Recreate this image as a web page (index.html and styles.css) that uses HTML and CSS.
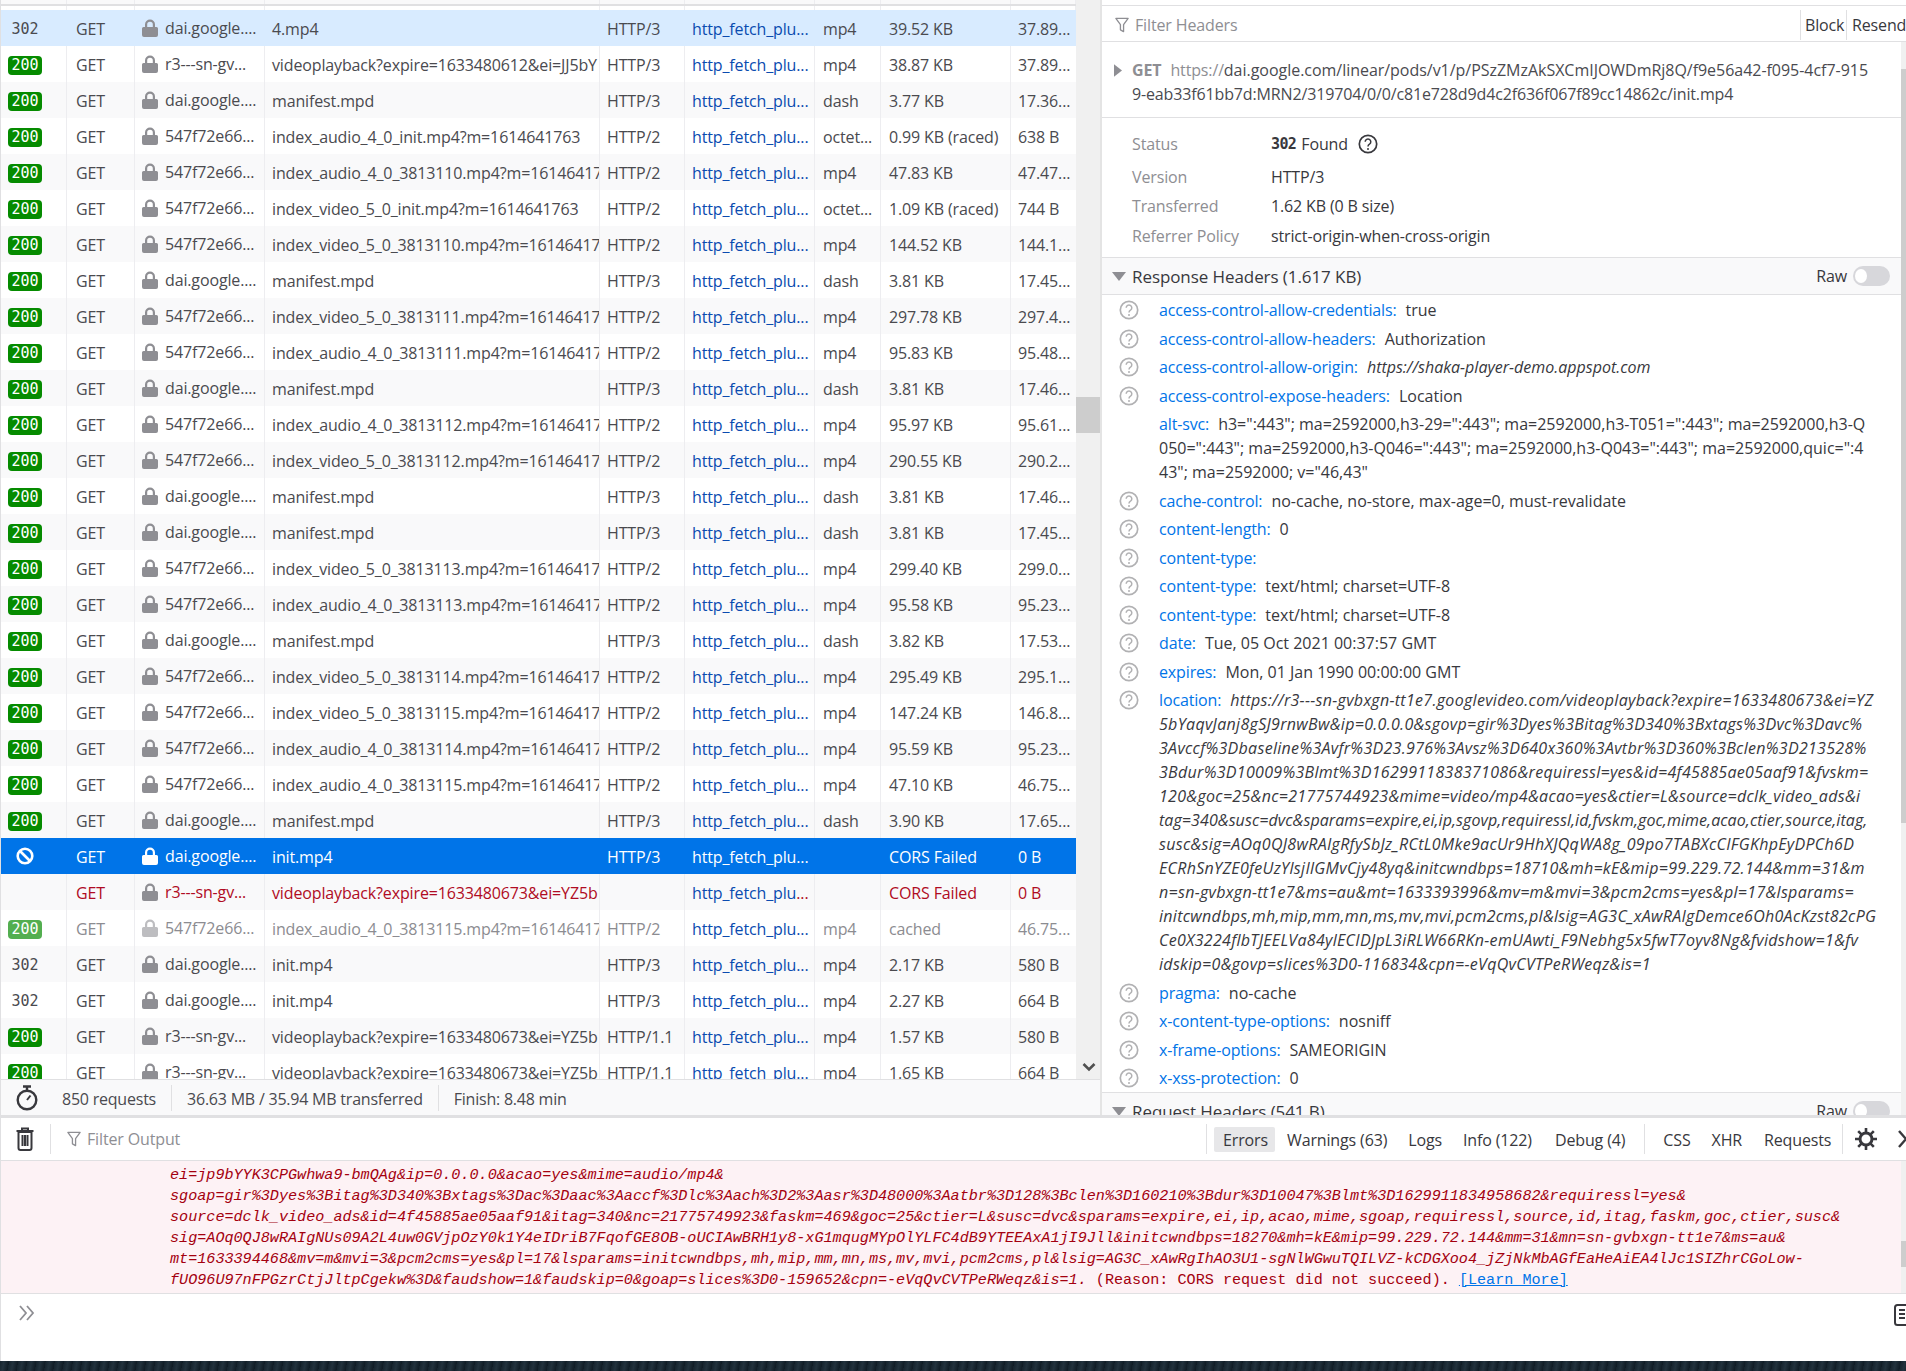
FILE: index.html
```html
<!DOCTYPE html>
<html lang="en">
<head>
<meta charset="utf-8">
<title>Network Monitor</title>
<link rel="stylesheet" href="styles.css">
</head>
<body>
<svg class="defs" width="0" height="0" aria-hidden="true">
  <symbol id="lock" viewBox="0 0 16 18"><path d="M3 8V5.500a5 5 0 0 1 10 0V8h1.500a1.500 1.500 0 0 1 1.500 1.500V16a2 2 0 0 1-2 2H2a2 2 0 0 1-2-2V9.500A1.500 1.500 0 0 1 1.500 8zM5.200 8h5.600V5.500a2.800 2.800 0 0 0-5.600 0z" fill="currentColor"/></symbol>
  <symbol id="help" viewBox="0 0 20 20"><circle cx="10" cy="10" r="8.700" fill="none" stroke="currentColor" stroke-width="1.700"/><path d="M7.200 7.800a2.800 2.800 0 1 1 4.300 2.400c-1 .6-1.500 1.100-1.500 2.200" fill="none" stroke="currentColor" stroke-width="1.500"/><circle cx="10" cy="15" r="1" fill="currentColor"/></symbol>
  <symbol id="funnel" viewBox="0 0 16 18"><path d="M1 1.500h14l-5.200 7v8l-3.600-2v-6z" fill="none" stroke="currentColor" stroke-width="1.500" stroke-linejoin="round"/></symbol>
</svg>
<div class="devtools">
  <div class="split">
    <section class="network">
      <div class="net-main">
        <div class="table">
          <div class="table-head"><i></i><i></i><i></i><i></i><i></i><i></i><i></i><i></i><i></i></div>
          <div class="table-gap"><i></i><i></i><i></i><i></i><i></i><i></i><i></i><i></i><i></i></div>
          <div class="rows">
            <div class="row hi"><span class="st"><b class="code">302</b></span><span>GET</span><span class="dom"><svg class="lock"><use href="#lock"/></svg>dai.google....</span><span>4.mp4</span><span>HTTP/3</span><span class="cause">http_fetch_plu...</span><span>mp4</span><span>39.52 KB</span><span>37.89...</span></div>
            <div class="row"><span class="st"><b class="badge">200</b></span><span>GET</span><span class="dom"><svg class="lock"><use href="#lock"/></svg>r3---sn-gv...</span><span>videoplayback?expire=1633480612&amp;ei=JJ5bY</span><span>HTTP/3</span><span class="cause">http_fetch_plu...</span><span>mp4</span><span>38.87 KB</span><span>37.89...</span></div>
            <div class="row"><span class="st"><b class="badge">200</b></span><span>GET</span><span class="dom"><svg class="lock"><use href="#lock"/></svg>dai.google....</span><span>manifest.mpd</span><span>HTTP/3</span><span class="cause">http_fetch_plu...</span><span>dash</span><span>3.77 KB</span><span>17.36...</span></div>
            <div class="row"><span class="st"><b class="badge">200</b></span><span>GET</span><span class="dom"><svg class="lock"><use href="#lock"/></svg>547f72e66...</span><span>index_audio_4_0_init.mp4?m=1614641763</span><span>HTTP/2</span><span class="cause">http_fetch_plu...</span><span>octet...</span><span>0.99 KB (raced)</span><span>638 B</span></div>
            <div class="row"><span class="st"><b class="badge">200</b></span><span>GET</span><span class="dom"><svg class="lock"><use href="#lock"/></svg>547f72e66...</span><span>index_audio_4_0_3813110.mp4?m=16146417</span><span>HTTP/2</span><span class="cause">http_fetch_plu...</span><span>mp4</span><span>47.83 KB</span><span>47.47...</span></div>
            <div class="row"><span class="st"><b class="badge">200</b></span><span>GET</span><span class="dom"><svg class="lock"><use href="#lock"/></svg>547f72e66...</span><span>index_video_5_0_init.mp4?m=1614641763</span><span>HTTP/2</span><span class="cause">http_fetch_plu...</span><span>octet...</span><span>1.09 KB (raced)</span><span>744 B</span></div>
            <div class="row"><span class="st"><b class="badge">200</b></span><span>GET</span><span class="dom"><svg class="lock"><use href="#lock"/></svg>547f72e66...</span><span>index_video_5_0_3813110.mp4?m=16146417</span><span>HTTP/2</span><span class="cause">http_fetch_plu...</span><span>mp4</span><span>144.52 KB</span><span>144.1...</span></div>
            <div class="row"><span class="st"><b class="badge">200</b></span><span>GET</span><span class="dom"><svg class="lock"><use href="#lock"/></svg>dai.google....</span><span>manifest.mpd</span><span>HTTP/3</span><span class="cause">http_fetch_plu...</span><span>dash</span><span>3.81 KB</span><span>17.45...</span></div>
            <div class="row"><span class="st"><b class="badge">200</b></span><span>GET</span><span class="dom"><svg class="lock"><use href="#lock"/></svg>547f72e66...</span><span>index_video_5_0_3813111.mp4?m=16146417</span><span>HTTP/2</span><span class="cause">http_fetch_plu...</span><span>mp4</span><span>297.78 KB</span><span>297.4...</span></div>
            <div class="row"><span class="st"><b class="badge">200</b></span><span>GET</span><span class="dom"><svg class="lock"><use href="#lock"/></svg>547f72e66...</span><span>index_audio_4_0_3813111.mp4?m=16146417</span><span>HTTP/2</span><span class="cause">http_fetch_plu...</span><span>mp4</span><span>95.83 KB</span><span>95.48...</span></div>
            <div class="row"><span class="st"><b class="badge">200</b></span><span>GET</span><span class="dom"><svg class="lock"><use href="#lock"/></svg>dai.google....</span><span>manifest.mpd</span><span>HTTP/3</span><span class="cause">http_fetch_plu...</span><span>dash</span><span>3.81 KB</span><span>17.46...</span></div>
            <div class="row"><span class="st"><b class="badge">200</b></span><span>GET</span><span class="dom"><svg class="lock"><use href="#lock"/></svg>547f72e66...</span><span>index_audio_4_0_3813112.mp4?m=16146417</span><span>HTTP/2</span><span class="cause">http_fetch_plu...</span><span>mp4</span><span>95.97 KB</span><span>95.61...</span></div>
            <div class="row"><span class="st"><b class="badge">200</b></span><span>GET</span><span class="dom"><svg class="lock"><use href="#lock"/></svg>547f72e66...</span><span>index_video_5_0_3813112.mp4?m=16146417</span><span>HTTP/2</span><span class="cause">http_fetch_plu...</span><span>mp4</span><span>290.55 KB</span><span>290.2...</span></div>
            <div class="row"><span class="st"><b class="badge">200</b></span><span>GET</span><span class="dom"><svg class="lock"><use href="#lock"/></svg>dai.google....</span><span>manifest.mpd</span><span>HTTP/3</span><span class="cause">http_fetch_plu...</span><span>dash</span><span>3.81 KB</span><span>17.46...</span></div>
            <div class="row"><span class="st"><b class="badge">200</b></span><span>GET</span><span class="dom"><svg class="lock"><use href="#lock"/></svg>dai.google....</span><span>manifest.mpd</span><span>HTTP/3</span><span class="cause">http_fetch_plu...</span><span>dash</span><span>3.81 KB</span><span>17.45...</span></div>
            <div class="row"><span class="st"><b class="badge">200</b></span><span>GET</span><span class="dom"><svg class="lock"><use href="#lock"/></svg>547f72e66...</span><span>index_video_5_0_3813113.mp4?m=16146417</span><span>HTTP/2</span><span class="cause">http_fetch_plu...</span><span>mp4</span><span>299.40 KB</span><span>299.0...</span></div>
            <div class="row"><span class="st"><b class="badge">200</b></span><span>GET</span><span class="dom"><svg class="lock"><use href="#lock"/></svg>547f72e66...</span><span>index_audio_4_0_3813113.mp4?m=16146417</span><span>HTTP/2</span><span class="cause">http_fetch_plu...</span><span>mp4</span><span>95.58 KB</span><span>95.23...</span></div>
            <div class="row"><span class="st"><b class="badge">200</b></span><span>GET</span><span class="dom"><svg class="lock"><use href="#lock"/></svg>dai.google....</span><span>manifest.mpd</span><span>HTTP/3</span><span class="cause">http_fetch_plu...</span><span>dash</span><span>3.82 KB</span><span>17.53...</span></div>
            <div class="row"><span class="st"><b class="badge">200</b></span><span>GET</span><span class="dom"><svg class="lock"><use href="#lock"/></svg>547f72e66...</span><span>index_video_5_0_3813114.mp4?m=16146417</span><span>HTTP/2</span><span class="cause">http_fetch_plu...</span><span>mp4</span><span>295.49 KB</span><span>295.1...</span></div>
            <div class="row"><span class="st"><b class="badge">200</b></span><span>GET</span><span class="dom"><svg class="lock"><use href="#lock"/></svg>547f72e66...</span><span>index_video_5_0_3813115.mp4?m=16146417</span><span>HTTP/2</span><span class="cause">http_fetch_plu...</span><span>mp4</span><span>147.24 KB</span><span>146.8...</span></div>
            <div class="row"><span class="st"><b class="badge">200</b></span><span>GET</span><span class="dom"><svg class="lock"><use href="#lock"/></svg>547f72e66...</span><span>index_audio_4_0_3813114.mp4?m=16146417</span><span>HTTP/2</span><span class="cause">http_fetch_plu...</span><span>mp4</span><span>95.59 KB</span><span>95.23...</span></div>
            <div class="row"><span class="st"><b class="badge">200</b></span><span>GET</span><span class="dom"><svg class="lock"><use href="#lock"/></svg>547f72e66...</span><span>index_audio_4_0_3813115.mp4?m=16146417</span><span>HTTP/2</span><span class="cause">http_fetch_plu...</span><span>mp4</span><span>47.10 KB</span><span>46.75...</span></div>
            <div class="row"><span class="st"><b class="badge">200</b></span><span>GET</span><span class="dom"><svg class="lock"><use href="#lock"/></svg>dai.google....</span><span>manifest.mpd</span><span>HTTP/3</span><span class="cause">http_fetch_plu...</span><span>dash</span><span>3.90 KB</span><span>17.65...</span></div>
            <div class="row sel"><span class="st"><svg class="block" viewBox="0 0 18 18"><circle cx="9" cy="9" r="7.300" fill="none" stroke="currentColor" stroke-width="2.600"/><path d="M4 4l10 10" stroke="currentColor" stroke-width="2.600"/></svg></span><span>GET</span><span class="dom"><svg class="lock"><use href="#lock"/></svg>dai.google....</span><span>init.mp4</span><span>HTTP/3</span><span class="cause">http_fetch_plu...</span><span></span><span>CORS Failed</span><span>0 B</span></div>
            <div class="row err"><span class="st"></span><span>GET</span><span class="dom"><svg class="lock"><use href="#lock"/></svg>r3---sn-gv...</span><span>videoplayback?expire=1633480673&amp;ei=YZ5b</span><span></span><span class="cause">http_fetch_plu<u>...</u></span><span></span><span>CORS Failed</span><span>0 B</span></div>
            <div class="row cached"><span class="st"><b class="badge">200</b></span><span>GET</span><span class="dom"><svg class="lock"><use href="#lock"/></svg>547f72e66...</span><span>index_audio_4_0_3813115.mp4?m=16146417</span><span>HTTP/2</span><span class="cause">http_fetch_plu...</span><span>mp4</span><span>cached</span><span>46.75...</span></div>
            <div class="row"><span class="st"><b class="code">302</b></span><span>GET</span><span class="dom"><svg class="lock"><use href="#lock"/></svg>dai.google....</span><span>init.mp4</span><span>HTTP/3</span><span class="cause">http_fetch_plu...</span><span>mp4</span><span>2.17 KB</span><span>580 B</span></div>
            <div class="row"><span class="st"><b class="code">302</b></span><span>GET</span><span class="dom"><svg class="lock"><use href="#lock"/></svg>dai.google....</span><span>init.mp4</span><span>HTTP/3</span><span class="cause">http_fetch_plu...</span><span>mp4</span><span>2.27 KB</span><span>664 B</span></div>
            <div class="row"><span class="st"><b class="badge">200</b></span><span>GET</span><span class="dom"><svg class="lock"><use href="#lock"/></svg>r3---sn-gv...</span><span>videoplayback?expire=1633480673&amp;ei=YZ5b</span><span>HTTP/1.1</span><span class="cause">http_fetch_plu...</span><span>mp4</span><span>1.57 KB</span><span>580 B</span></div>
            <div class="row"><span class="st"><b class="badge">200</b></span><span>GET</span><span class="dom"><svg class="lock"><use href="#lock"/></svg>r3---sn-gv...</span><span>videoplayback?expire=1633480673&amp;ei=YZ5b</span><span>HTTP/1.1</span><span class="cause">http_fetch_plu...</span><span>mp4</span><span>1.65 KB</span><span>664 B</span></div>
          </div>
        </div>
        <div class="net-scroll"><div class="net-thumb"></div><svg class="chev" viewBox="0 0 14 10"><path d="M1.500 2l5.500 5.500L12.500 2" fill="none" stroke="currentColor" stroke-width="2.600"/></svg></div>
      </div>
      <div class="statusbar">
        <svg class="watch" viewBox="0 0 22 26"><path d="M7 1.500h8M11 2v3" stroke="currentColor" stroke-width="2.400" fill="none"/><circle cx="11" cy="15" r="9.300" fill="none" stroke="currentColor" stroke-width="2.400"/><path d="M11 15l3.500-4.500" stroke="currentColor" stroke-width="2" fill="none"/></svg>
        <span class="stat">850 requests</span>
        <span class="stat">36.63 MB / 35.94 MB transferred</span>
        <span class="stat last">Finish: 8.48 min</span>
      </div>
    </section>
    <aside class="side">
      <div class="side-filter">
        <svg class="funnel"><use href="#funnel"/></svg>
        <span class="ph">Filter Headers</span>
        <span class="side-btn block-btn">Block</span>
        <span class="side-btn resend-btn">Resend</span>
      </div>
      <div class="side-body">
        <div class="url-sec">
          <svg class="tw-r" viewBox="0 0 9 14"><path d="M0 0l9 7-9 7z" fill="currentColor"/></svg>
          <div class="url"><b>GET</b><span class="scheme">https://</span><span class="url-head">dai.google.com/linear/pods/v1/p/PSzZMzAkSXCmIJOWDmRj8Q/f9e56a42-f095-4cf7-915</span><br>9-eab33f61bb7d:MRN2/319704/0/0/c81e728d9d4c2f636f067f89cc14862c/init.mp4</div>
        </div>
        <dl class="sum">
          <dt>Status</dt><dd><b class="code dark">302</b> Found<svg class="q dark"><use href="#help"/></svg></dd>
          <dt>Version</dt><dd>HTTP/3</dd>
          <dt>Transferred</dt><dd>1.62 KB (0 B size)</dd>
          <dt>Referrer Policy</dt><dd>strict-origin-when-cross-origin</dd>
        </dl>
        <div class="sec-head"><svg class="tw-d" viewBox="0 0 14 9"><path d="M0 0h14L7 9z" fill="currentColor"/></svg><span>Response Headers (1.617 KB)</span><em>Raw</em><i class="toggle"></i></div>
        <div class="hdrs">
          <div class="h"><svg class="q"><use href="#help"/></svg><p><a>access-control-allow-credentials:</a>true</p></div>
          <div class="h"><svg class="q"><use href="#help"/></svg><p><a>access-control-allow-headers:</a>Authorization</p></div>
          <div class="h"><svg class="q"><use href="#help"/></svg><p><a>access-control-allow-origin:</a><em>https://shaka-player-demo.appspot.com</em></p></div>
          <div class="h"><svg class="q"><use href="#help"/></svg><p><a>access-control-expose-headers:</a>Location</p></div>
          <div class="h"><span class="q"></span><p><a>alt-svc:</a>h3=":443"; ma=2592000,h3-29=":443"; ma=2592000,h3-T051=":443"; ma=2592000,h3-Q<br>050=":443"; ma=2592000,h3-Q046=":443"; ma=2592000,h3-Q043=":443"; ma=2592000,quic=":4<br>43"; ma=2592000; v="46,43"</p></div>
          <div class="h"><svg class="q"><use href="#help"/></svg><p><a>cache-control:</a>no-cache, no-store, max-age=0, must-revalidate</p></div>
          <div class="h"><svg class="q"><use href="#help"/></svg><p><a>content-length:</a>0</p></div>
          <div class="h"><svg class="q"><use href="#help"/></svg><p><a>content-type:</a></p></div>
          <div class="h"><svg class="q"><use href="#help"/></svg><p><a>content-type:</a>text/html; charset=UTF-8</p></div>
          <div class="h"><svg class="q"><use href="#help"/></svg><p><a>content-type:</a>text/html; charset=UTF-8</p></div>
          <div class="h"><svg class="q"><use href="#help"/></svg><p><a>date:</a>Tue, 05 Oct 2021 00:37:57 GMT</p></div>
          <div class="h"><svg class="q"><use href="#help"/></svg><p><a>expires:</a>Mon, 01 Jan 1990 00:00:00 GMT</p></div>
          <div class="h"><svg class="q"><use href="#help"/></svg><p><a>location:</a><em class="loc">https://r3---sn-gvbxgn-tt1e7.googlevideo.com/videoplayback?expire=1633480673&amp;ei=YZ<br>5bYaqvJanj8gSJ9rnwBw&amp;ip=0.0.0.0&amp;sgovp=gir%3Dyes%3Bitag%3D340%3Bxtags%3Dvc%3Davc%<br>3Avccf%3Dbaseline%3Avfr%3D23.976%3Avsz%3D640x360%3Avtbr%3D360%3Bclen%3D213528%<br>3Bdur%3D10009%3Blmt%3D1629911838371086&amp;requiressl=yes&amp;id=4f45885ae05aaf91&amp;fvskm=<br>120&amp;goc=25&amp;nc=21775744923&amp;mime=video/mp4&amp;acao=yes&amp;ctier=L&amp;source=dclk_video_ads&amp;i<br><span class="tight">tag=340&amp;susc=dvc&amp;sparams=expire,ei,ip,sgovp,requiressl,id,fvskm,goc,mime,acao,ctier,source,itag,</span><br>susc&amp;sig=AOq0QJ8wRAIgRfySbJz_RCtL0Mke9acUr9HhXJQqWA8g_09po7TABXcCIFGKhpEyDPCh6D<br>ECRhSnYZE0feUzYlsjIlGMvCjy48yq&amp;initcwndbps=18710&amp;mh=kE&amp;mip=99.229.72.144&amp;mm=31&amp;m<br>n=sn-gvbxgn-tt1e7&amp;ms=au&amp;mt=1633393996&amp;mv=m&amp;mvi=3&amp;pcm2cms=yes&amp;pl=17&amp;lsparams=<br>initcwndbps,mh,mip,mm,mn,ms,mv,mvi,pcm2cms,pl&amp;lsig=AG3C_xAwRAIgDemce6Oh0AcKzst82cPG<br>Ce0X3224flbTJEELVa84ylECIDJpL3iRLW66RKn-emUAwti_F9Nebhg5x5fwT7oyv8Ng&amp;fvidshow=1&amp;fv<br>idskip=0&amp;govp=slices%3D0-116834&amp;cpn=-eVqQvCVTPeRWeqz&amp;is=1</em></p></div>
          <div class="h"><svg class="q"><use href="#help"/></svg><p><a>pragma:</a>no-cache</p></div>
          <div class="h"><svg class="q"><use href="#help"/></svg><p><a>x-content-type-options:</a>nosniff</p></div>
          <div class="h"><svg class="q"><use href="#help"/></svg><p><a>x-frame-options:</a>SAMEORIGIN</p></div>
          <div class="h"><svg class="q"><use href="#help"/></svg><p><a>x-xss-protection:</a>0</p></div>
        </div>
        <div class="sec-head"><svg class="tw-d" viewBox="0 0 14 9"><path d="M0 0h14L7 9z" fill="currentColor"/></svg><span>Request Headers (541 B)</span><em>Raw</em><i class="toggle"></i></div>
        <div class="side-scroll"><div class="side-thumb"></div></div>
      </div>
    </aside>
  </div>
  <div class="console-bar">
    <svg class="trash" viewBox="0 0 18 24"><path d="M6 3V1.500h6V3M.5 4h17" fill="none" stroke="currentColor" stroke-width="2"/><path d="M2.500 5h13v16a2 2 0 0 1-2 2h-9a2 2 0 0 1-2-2zM6.500 8v11M9 8v11M11.500 8v11" fill="none" stroke="currentColor" stroke-width="2"/></svg>
    <span class="vr"></span>
    <svg class="funnel"><use href="#funnel"/></svg>
    <span class="ph">Filter Output</span>
    <div class="tabs">
      <span class="vr"></span>
      <span class="tab on">Errors</span>
      <span class="tab first">Warnings (63)</span>
      <span class="tab">Logs</span>
      <span class="tab">Info (122)</span>
      <span class="tab dbg">Debug (4)</span>
      <span class="vr mid"></span>
      <span class="tab css">CSS</span>
      <span class="tab">XHR</span>
      <span class="tab req">Requests</span>
      <span class="vr end"></span>
      <svg class="gear" viewBox="0 0 24 24"><path d="M12 1v5M12 18v5M1 12h5M18 12h5M4.200 4.200l3.500 3.500M16.300 16.300l3.500 3.500M4.200 19.800l3.500-3.500M16.300 7.700l3.500-3.500" stroke="currentColor" stroke-width="2.600" fill="none"/><circle cx="12" cy="12" r="6" fill="none" stroke="currentColor" stroke-width="3"/></svg>
      <svg class="more" viewBox="0 0 10 18"><path d="M1 1l7 8-7 8" fill="none" stroke="currentColor" stroke-width="2.400"/></svg>
    </div>
  </div>
  <div class="console-msg">
    <div class="msg">ei=jp9bYYK3CPGwhwa9-bmQAg&amp;ip=0.0.0.0&amp;acao=yes&amp;mime=audio/mp4&amp;<br>sgoap=gir%3Dyes%3Bitag%3D340%3Bxtags%3Dac%3Daac%3Aaccf%3Dlc%3Aach%3D2%3Aasr%3D48000%3Aatbr%3D128%3Bclen%3D160210%3Bdur%3D10047%3Blmt%3D1629911834958682&amp;requiressl=yes&amp;<br>source=dclk_video_ads&amp;id=4f45885ae05aaf91&amp;itag=340&amp;nc=21775749923&amp;faskm=469&amp;goc=25&amp;ctier=L&amp;susc=dvc&amp;sparams=expire,ei,ip,acao,mime,sgoap,requiressl,source,id,itag,faskm,goc,ctier,susc&amp;<br>sig=AOq0QJ8wRAIgNUs09A2L4uw0GVjpOzY0k1Y4eIDriB7FqofGE8OB-oUCIAwBRH1y8-xG1mqugMYpOlYLFC4dB9YTEEAxA1jI9Jll&amp;initcwndbps=18270&amp;mh=kE&amp;mip=99.229.72.144&amp;mm=31&amp;mn=sn-gvbxgn-tt1e7&amp;ms=au&amp;<br>mt=1633394468&amp;mv=m&amp;mvi=3&amp;pcm2cms=yes&amp;pl=17&amp;lsparams=initcwndbps,mh,mip,mm,mn,ms,mv,mvi,pcm2cms,pl&amp;lsig=AG3C_xAwRgIhAO3U1-sgNlWGwuTQILVZ-kCDGXoo4_jZjNkMbAGfEaHeAiEA4lJc1SIZhrCGoLow-<br>fUO96U97nFPGzrCtjJltpCgekw%3D&amp;faudshow=1&amp;faudskip=0&amp;goap=slices%3D0-159652&amp;cpn=-eVqQvCVTPeRWeqz&amp;is=1. <span class="reason">(Reason: CORS request did not succeed).</span> <a class="learn">[Learn More]</a></div>
    <div class="msg-scroll"><div class="msg-thumb"></div></div>
  </div>
  <div class="console-input">
    <svg class="prompt" viewBox="0 0 18 18"><path d="M2 2l6 7-6 7M9 2l6 7-6 7" fill="none" stroke="currentColor" stroke-width="1.800"/></svg>
    <svg class="sideicon" viewBox="0 0 12 22"><rect x="1" y="1" width="18" height="20" rx="2.500" fill="none" stroke="currentColor" stroke-width="2"/><path d="M5 6h6M5 10h6M5 14h6" stroke="currentColor" stroke-width="2"/></svg>
  </div>
</div>
<div class="desktop"></div>
</body>
</html>
```
FILE: styles.css
```css
* { box-sizing: border-box; }
html, body { margin: 0; height: 1371px; overflow: hidden; background: #fff; }
body { font-family: "Open Sans", "Noto Sans", sans-serif; font-size: 16px; letter-spacing: -.14px; color: #38383d; }
.defs { position: absolute; }
.devtools { height: 1361px; display: flex; flex-direction: column; border-left: 1px solid #e0e0e2; }
.split { height: 1118px; display: flex; border-bottom: 3px solid #e0e0e2; flex: none; }

.network { width: 1101px; flex: none; display: flex; flex-direction: column; border-right: 2px solid #e4e4e4; }
.net-main { height: 1079px; display: flex; flex: none; overflow: hidden; }
.table { width: 1075px; flex: none; }
.table-head, .table-gap, .row { display: grid; grid-template-columns: 66px 68px 130px 335px 85px 130px 66px 130px 65px; }
.table-head { height: 6px; background: #f9f9fa; border-bottom: 2px solid #e0e0e2; }
.table-gap { height: 4px; }
.table-head i, .table-gap i { border-right: 1px solid #ededf0; }
.rows { display: flex; flex-direction: column; }
.row { height: 36px; flex: none; align-items: center; line-height: 38px; color: #4a4a4f; white-space: nowrap; }
.row:nth-child(odd) { background: #f9f9fa; }
.row:nth-child(even) { background: #fff; }
.row > span { display: block; height: 36px; overflow: hidden; padding-left: 7px; border-right: 1px solid #ededf0; }
.row > span:nth-child(2) { padding-left: 9px; }
.row > span:nth-child(7), .row > span:nth-child(8) { padding-left: 8px; }
.row > span:last-child { border-right: 0; }
.row.hi { background: #d8ebff; }
.row.hi > span, .row.sel > span { border-right-color: transparent; }
.row.sel { background: #0074e8; color: #fff; }
.row.sel .cause, .row.sel .lock { color: #fff; }
.row.err, .row.err .dom { color: #b00b23; }
.row.err .lock { color: #8e8e93; }
.row.err .cause u { color: #b00b23; text-decoration: none; }
.row.cached { color: #8c8c91; }
.row.cached .lock { color: #bdbdc0; }
.row.cached .badge { background: #53ae50; }
.row > .st { display: flex; align-items: center; padding-left: 7px; }
.badge { display: block; width: 34px; height: 19px; margin-top: 2px; border-radius: 4px; background: #058b00; color: #fff; font: 400 15px/19px "DejaVu Sans Mono", monospace; text-align: center; letter-spacing: -.1px; }
.code { display: block; width: 34px; margin-top: 2px; font: 400 15px/19px "DejaVu Sans Mono", monospace; text-align: center; letter-spacing: -.1px; }
.code.dark { width: auto; margin: 0; font-weight: 700; letter-spacing: -.6px; color: #38383d; }
.row > .dom { display: flex; align-items: center; gap: 7px; padding-left: 7px; }
.lock { width: 16px; height: 18px; flex: none; color: #8e8e93; }
.cause { color: #0a4bb0; }
.block { width: 18px; height: 18px; color: #fff; margin: 0 0 0 8px; }

.net-scroll { flex: 1; background: #f0f0f0; position: relative; padding-top: 397px; }
.net-thumb { height: 36px; background: #cdcdcd; }
.chev { position: absolute; bottom: 7px; left: 6px; width: 14px; height: 10px; color: #505050; }

.statusbar { height: 36px; flex: none; display: flex; align-items: center; background: #f9f9fa; border-top: 1px solid #e0e0e2; padding-left: 15px; }
.watch { width: 22px; height: 26px; color: #38383d; flex: none; margin-right: 24px; }
.stat { display: block; height: 26px; line-height: 28px; padding-right: 15px; margin-right: 15px; border-right: 1px solid #e0e0e2; color: #4a4a4f; white-space: nowrap; letter-spacing: -.22px; }
.stat.last { border: 0; }

.side { flex: 1; min-width: 0; display: flex; flex-direction: column; overflow: hidden; }
.side-filter { height: 37px; margin-top: 5px; flex: none; display: flex; align-items: center; padding: 2px 0 0 13px; border-bottom: 1px solid #e0e0e2; border-top: 1px solid #e0e0e2; }
.funnel { width: 14px; height: 18px; color: #8e8e93; flex: none; }
.ph { color: #8e8e93; margin-left: 6px; }
.side-filter .ph { flex: 1; }
.side-btn { display: block; flex: none; height: 30px; line-height: 30px; border-left: 1px solid #e0e0e2; color: #38383d; white-space: nowrap; }
.block-btn { width: 46px; padding-left: 4px; }
.resend-btn { width: 60px; padding-left: 5px; }
.side-body { flex: 1; position: relative; overflow: hidden; }
.url-sec { height: 76px; padding: 16px 0 0 12px; display: flex; gap: 10px; border-bottom: 1px solid #e0e0e2; white-space: nowrap; }
.tw-r { width: 8px; height: 13px; color: #8e8e93; margin-top: 6px; flex: none; }
.url { line-height: 24px; color: #4a4a4f; }
.url b { color: #8e8e93; margin-right: 9px; font-weight: 700; }
.url-head { letter-spacing: -.03px; }
.scheme { color: #8e8e93; }
.sum { margin: 0; height: 139px; padding: 8px 0 0 30px; display: grid; grid-template-columns: 139px 1fr; grid-template-rows: 36px 29.500px 29.500px 29.500px; align-items: center; }
.sum dt { color: #8e8e93; }
.sum dd { margin: 0; display: flex; align-items: center; gap: 5px; color: #38383d; }
.q { width: 20px; height: 20px; flex: none; color: #b1b1b3; display: block; }
.q.dark { color: #38383d; margin-left: 5px; }
.sec-head { height: 38px; display: flex; align-items: center; background: #f9f9fa; border-top: 1px solid #e0e0e2; border-bottom: 1px solid #e0e0e2; padding: 0 16px 0 10px; color: #38383d; }
.sec-head .tw-d { width: 14px; height: 9px; color: #8e8e93; flex: none; margin-right: 6px; }
.sec-head span { flex: 1; font-size: 17px; letter-spacing: -.08px; }
.sec-head em { font-style: normal; margin-right: 6px; }
.toggle { display: block; width: 37px; height: 20px; border-radius: 10px; background: #d7d7db; position: relative; }
.toggle::after { content: ""; position: absolute; left: 2px; top: 3px; width: 12px; height: 14px; border-radius: 50%; background: #fff; }
.hdrs { padding-top: 1px; height: 797px; }
.h { display: flex; align-items: flex-start; padding: 2px 0 2.500px 17px; gap: 20px; line-height: 24px; }
.h .q { margin-top: 2px; }
.h p { margin: 0; white-space: nowrap; color: #38383d; letter-spacing: 0; }
.h a { color: #0074e8; margin-right: 9px; letter-spacing: -.14px; }
.h em { letter-spacing: 0; }
.h em.loc { letter-spacing: .3px; }
.h em.loc .tight { letter-spacing: .08px; }
.side-scroll { position: absolute; top: 0; right: 0; bottom: 0; width: 5px; background: #f0f0f0; }
.side-thumb { height: 754px; margin-top: 27px; background: #cdcdcd; }

.console-bar { height: 43px; flex: none; display: flex; align-items: center; padding-left: 15px; border-bottom: 1px solid #e0e0e2; }
.trash { width: 18px; height: 24px; color: #38383d; flex: none; margin-right: 16px; }
.vr { display: block; width: 1px; height: 30px; background: #e0e0e2; flex: none; }
.console-bar .funnel { margin: 0 6px 0 16px; }
.console-bar .ph { margin: 0; flex: 1; line-height: 28px; }
.tabs { display: flex; align-items: center; width: 700px; flex: none; overflow: hidden; }
.tab { display: block; flex: none; height: 25px; line-height: 27px; margin-left: 21px; white-space: nowrap; color: #38383d; }
.tab.on { background: #e7e7e9; margin-left: 7px; padding: 0 9px; width: 61px; border-radius: 2px; }
.tab.first { margin-left: 12px; }
.tab.dbg { margin-left: 23px; }
.tab.css { margin-left: 18px; }
.tab.req { margin-left: 22px; }
.vr.mid { margin-left: 19px; }
.vr.end { margin-left: 11px; }
.gear { width: 24px; height: 24px; color: #38383d; margin: 0 20px 0 11px; flex: none; }
.more { width: 10px; height: 18px; color: #38383d; flex: none; }

.console-msg { height: 133px; flex: none; display: flex; justify-content: space-between; background: #fdf2f5; border-bottom: 1px solid #e0e0e2; padding-left: 169px; overflow: hidden; }
.msg { padding-top: 4px; font: italic 400 15.130px/21px "Liberation Mono", monospace; letter-spacing: 0; color: #a4000f; white-space: nowrap; }
.msg-scroll { width: 5px; flex: none; background: #f0f0f0; padding-top: 80px; }
.msg-thumb { height: 26px; background: #cdcdcd; }
.reason { font-style: normal; }
.learn { font-style: normal; color: #0074e8; text-decoration: underline; }
.console-input { flex: 1; display: flex; justify-content: space-between; padding: 10px 0 0 17px; }
.prompt { width: 18px; height: 18px; color: #8e8e93; }
.sideicon { width: 12px; height: 22px; color: #38383d; }
.desktop { height: 10px; background: repeating-linear-gradient(100deg, #16242e 0, #22323d 4px, #101c25 9px); }
```
